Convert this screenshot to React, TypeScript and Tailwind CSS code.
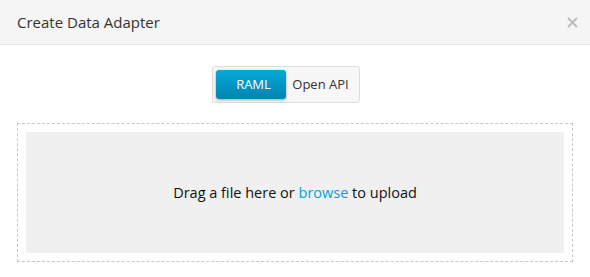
import React, { useState } from 'react';

export default function App() {
  const [tipo, setTipo] = useState<'raml' | 'openapi'>('raml');

  const ativo = 'w-[70px] h-[29px] rounded-[3px] bg-gradient-to-b from-[#05a9d8] to-[#0384b1] text-white text-[13px] shadow-[0_1px_3px_rgba(0,0,0,0.35)]';
  const inativo = 'w-[70px] h-[29px] rounded-[3px] text-[#333] text-[13px]';

  return (
    <div className="w-[590px] h-[277px] bg-white overflow-hidden" style={{ fontFamily: '"Open Sans", "Liberation Sans", sans-serif' }}>
      <div className="h-[45px] bg-[#f5f5f5] border-b border-[#e5e5e5] flex items-center justify-between pl-[17px] pr-[10px]">
        <h2 className="text-[15px] text-[#333] leading-none">Create Data Adapter</h2>
        <button className="w-[16px] h-[16px] flex items-center justify-center">
          <svg width="11" height="11" viewBox="0 0 11 11">
            <path d="M1 1L10 10M10 1L1 10" stroke="#bbb" strokeWidth="1.8" />
          </svg>
        </button>
      </div>

      <div className="flex justify-center pt-[21px]">
        <div className="flex items-center p-[3px] border border-[#ddd] rounded-[3px] bg-[#f7f7f7] -ml-[19px]">
          <button onClick={() => setTipo('raml')} className={tipo === 'raml' ? `${ativo} pl-[6px]` : inativo}>
            RAML
          </button>
          <button onClick={() => setTipo('openapi')} className={tipo === 'openapi' ? ativo : inativo}>
            Open API
          </button>
        </div>
      </div>

      <div className="mx-[17px] mt-[20px] border border-dashed border-[#c8c8c8] p-[8px]">
        <div className="h-[121px] bg-[#f0f0f0] flex items-center justify-center">
          <p className="text-[14.5px] text-[#111] font-normal">
            Drag a file here or <span className="text-[#06a0d6] cursor-pointer">browse</span> to upload
          </p>
        </div>
      </div>
    </div>
  );
}
